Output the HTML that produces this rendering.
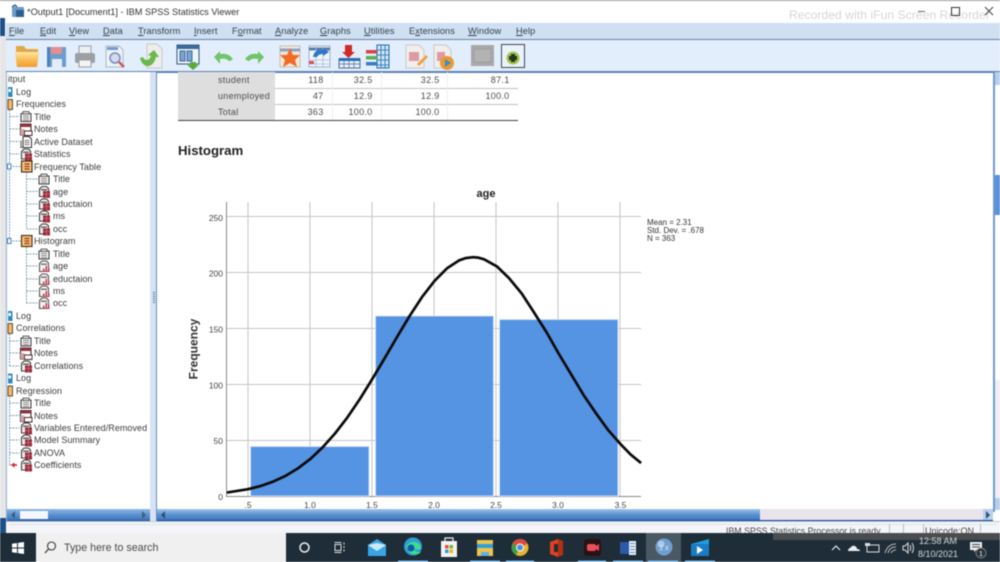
<!DOCTYPE html>
<html><head><meta charset="utf-8"><style>
html,body{margin:0;padding:0;width:1000px;height:562px;overflow:hidden;background:#fff}
body{position:relative;font-family:"Liberation Sans",sans-serif;color:#333}
.a{position:absolute}
.t{position:absolute;white-space:nowrap;line-height:12px;font-size:9px}
.m{position:absolute;top:25px;font-size:9.2px;line-height:12px;color:#333e4c;white-space:nowrap;letter-spacing:.1px}
.m u{text-underline-offset:1px}
.r{position:absolute;font-size:9px;line-height:12px;color:#4c4c4c;letter-spacing:.3px;white-space:nowrap}
.n{text-align:right;width:40px}
.tr{position:absolute;left:0;font-size:9px;line-height:12px;color:#3c3c3c;white-space:nowrap;letter-spacing:.05px}
svg{position:absolute;overflow:visible}
#wrap{position:absolute;left:0;top:0;width:1000px;height:562px;filter:blur(.45px)}
</style></head><body><div id="wrap">

<!-- window frame -->
<div class="a" style="left:0;top:0;width:1000px;height:1px;background:#9a9a9a"></div>
<div class="a" style="left:0;top:18px;width:5px;height:18px;background:#1e4f86"></div>
<div class="a" style="left:0;top:36px;width:6px;height:497px;background:#e6e6e6"></div>
<div class="a" style="left:0;top:518px;width:6px;height:15px;background:#1e4f86"></div>

<!-- title -->
<svg style="left:11px;top:4px" width="14" height="14" viewBox="0 0 14 14"><rect x="1" y="3" width="12" height="10" rx="1" fill="#6d9cc4"/><rect x="5" y="6" width="8" height="7" fill="#2f5f8c"/><path d="M1 3l3-2 2 2" fill="none" stroke="#2b5c88" stroke-width="1.4"/></svg>
<div class="t" style="left:27px;top:6px;font-size:9.2px;color:#333">*Output1 [Document1] - IBM SPSS Statistics Viewer</div>
<div class="t" style="left:789px;top:8px;font-size:12px;line-height:14px;color:#d6d6d6;letter-spacing:.1px">Recorded with iFun Screen Recorder</div>
<div class="a" style="left:918px;top:11px;width:7px;height:1px;background:#666"></div>
<div class="a" style="left:951px;top:7px;width:7px;height:7px;border:1px solid #333"></div>
<svg style="left:984px;top:6px" width="10" height="10" viewBox="0 0 10 10"><path d="M1 1l8 8M9 1l-8 8" stroke="#444" stroke-width="1"/></svg>

<!-- menu -->
<div class="a" style="left:6px;top:23px;width:994px;height:16px;background:#cfe0f3"></div>
<div class="a" style="left:6px;top:39px;width:994px;height:1px;background:#6d84a3"></div>
<div class="a" style="left:6px;top:40px;width:994px;height:31px;background:#e3eefc"></div>
<div class="a" style="left:6px;top:71px;width:994px;height:1.5px;background:#5f82b5"></div>
<div class="m" style="left:9px"><u>F</u>ile</div>
<div class="m" style="left:40px"><u>E</u>dit</div>
<div class="m" style="left:69px"><u>V</u>iew</div>
<div class="m" style="left:103px"><u>D</u>ata</div>
<div class="m" style="left:138px"><u>T</u>ransform</div>
<div class="m" style="left:194px"><u>I</u>nsert</div>
<div class="m" style="left:232px">F<u>o</u>rmat</div>
<div class="m" style="left:275px"><u>A</u>nalyze</div>
<div class="m" style="left:320px"><u>G</u>raphs</div>
<div class="m" style="left:364px"><u>U</u>tilities</div>
<div class="m" style="left:409px">E<u>x</u>tensions</div>
<div class="m" style="left:468px"><u>W</u>indow</div>
<div class="m" style="left:516px"><u>H</u>elp</div>

<!-- toolbar icons -->
<svg style="left:0;top:38px" width="540" height="34" viewBox="0 0 540 34">
 <defs><linearGradient id="fo" x1="0" y1="0" x2="0" y2="1"><stop offset="0" stop-color="#ffe6a8"/><stop offset=".45" stop-color="#fbc25c"/><stop offset="1" stop-color="#f19a2e"/></linearGradient></defs>
 <!-- folder -->
 <path d="M16 8h8l2 3h12v6H16z" fill="#e2a748"/><path d="M15 14h24l-2 15H17z" fill="url(#fo)"/>
 <!-- save -->
 <rect x="47" y="9" width="19" height="20" rx="1" fill="#6a9dd0"/><rect x="51" y="9" width="11" height="7" fill="#e58d92"/><rect x="52" y="21" width="10" height="8" fill="#e4ecf5"/><rect x="47" y="9" width="3" height="20" fill="#4d82ba"/>
 <!-- print -->
 <rect x="79" y="8" width="12" height="8" fill="#eceff2" stroke="#989da3"/><rect x="75" y="15" width="20" height="10" rx="2" fill="#9aa0a5"/><rect x="79" y="22" width="12" height="7" fill="#f3f3f3" stroke="#989da3"/>
 <!-- preview -->
 <path d="M106 8h13l4 4v17h-17z" fill="#eef2f6" stroke="#a9b9c8"/><rect x="107" y="9" width="11" height="3" fill="#6e9ccc"/><circle cx="115" cy="20" r="5" fill="#cfdcf0" stroke="#8488b8" stroke-width="1.500"/><path d="M119 24l5 5" stroke="#c8565a" stroke-width="2.400"/>
 <!-- export -->
 <path d="M147 6h10l5 5v19h-15z" fill="#ededed" stroke="#c9c9c9"/><path d="M140 20c1 5 5 9 9 8 4-1 6-5 7-9l3 0-5-7-6 5 3 1c-1 2-2 4-4 4-2 0-3-1-4-3z" fill="#6cb84f"/>
 <!-- table down -->
 <rect x="177" y="7" width="22" height="19" fill="#eef4fb" stroke="#33567c"/><rect x="177" y="7" width="22" height="4" fill="#3e6a9a"/><rect x="180" y="13" width="5" height="10" fill="#7ba4d0" stroke="#3e6a9a"/><rect x="187" y="13" width="5" height="10" fill="#7ba4d0" stroke="#3e6a9a"/><path d="M190 24h6v3h3l-6 5-6-5h3z" fill="#56ad3e"/>
 <!-- undo/redo -->
 <path d="M214 19l6-6v3c6-1 10 1 13 5l-3 2h-1c-2-2-5-3-9-2v5z" fill="#6fc56a"/><path d="M264 19l-6-6v3c-6-1-10 1-13 5l3 2h1c2-2 5-3 9-2v5z" fill="#6fc56a"/>
 <!-- star -->
 <rect x="280" y="8" width="20" height="21" fill="#efe9df" stroke="#c9c0ae"/><path d="M280 12h20" stroke="#8fa3bd" stroke-width="3"/><path d="M290 10l3 7h7l-5 5 2 7-7-4-7 4 2-7-5-5h7z" fill="#f26a25"/>
 <!-- goto -->
 <rect x="309" y="8" width="21" height="21" fill="#f0f4fa" stroke="#9fb3cc"/><path d="M309 11h21" stroke="#5a7da8" stroke-width="3"/><path d="M309 22h21M309 26h21M316 8v21M323 8v21" stroke="#a7bdd6" stroke-width=".8"/><path d="M313 19c1-6 5-8 10-7v-2l6 4-6 4v-2c-3 0-5 1-6 3z" fill="#2d76c8"/><rect x="309" y="23" width="5" height="3" fill="#e2485a"/>
 <!-- insert -->
 <rect x="339" y="21" width="21" height="9" fill="#e8f0fa" stroke="#4b6c97"/><rect x="339" y="20" width="21" height="3" fill="#2d6cb8"/><path d="M339 26h21M344 23v7M349 23v7M354 23v7" stroke="#4b6c97" stroke-width=".7"/><path d="M345 7h7v7h3l-6.500 6-6.500-6h3z" fill="#cf2a24"/>
 <!-- split -->
 <rect x="377" y="7" width="12" height="23" fill="#cfe4f6" stroke="#1f6da8"/><path d="M377 12h12M377 17h12M377 22h12M377 27h12M381 7v23M385 7v23" stroke="#1f6da8" stroke-width=".8"/><rect x="366" y="12" width="11" height="3.500" fill="#d6434a"/><rect x="366" y="18" width="11" height="3.500" fill="#5cb04c"/><rect x="366" y="24" width="11" height="3.500" fill="#3a79c4"/>
 <!-- note -->
 <path d="M406 7h13l5 5v18h-18z" fill="#f1eeee" stroke="#cdc8c8"/><path d="M409 14h10v9h-10z" fill="#de9aa2"/><path d="M417 26l9-9 2 2-9 9z" fill="#eda23c"/>
 <!-- chart play -->
 <path d="M434 7h12l5 5v18h-17z" fill="#f1eeee" stroke="#cdc8c8"/><path d="M437 14h8v9h-8z" fill="#de9aa2"/><circle cx="447" cy="25" r="7" fill="#ea9a33"/><path d="M445 21l6 4-6 4z" fill="#3b8ac7"/>
 <!-- gray box -->
 <rect x="471" y="7" width="23" height="21" fill="#a9a9a9"/><rect x="474" y="11" width="17" height="13" fill="#b3b3b3" stroke="#9c9c9c"/>
 <!-- green -->
 <rect x="501.500" y="6.500" width="23" height="23" fill="#eaf2fb" stroke="#3c4858"/><circle cx="513" cy="20" r="6.500" fill="#a6bf4b"/><path d="M511 16h4v2h2v4h-2v2h-4v-2h-2v-4h2z" fill="#1e3a20"/>
</svg>

<!-- tree panel -->
<div class="a" style="left:6px;top:72px;width:143px;height:449px;background:#fff;border-right:1px solid #7fa3cc;border-left:1px solid #8fb0d4"></div>
<div class="a" style="left:150px;top:72px;width:6px;height:449px;background:#d7e3f2"></div>
<div class="a" style="left:155.500px;top:72px;width:1.500px;height:449px;background:#5f8cc0"></div>
<div class="a" style="left:153px;top:292px;width:2px;height:12px;background:repeating-linear-gradient(#5a7da8 0 1px,transparent 1px 2px)"></div>

<svg style="left:0;top:0" width="150" height="480" viewBox="0 0 150 480">
 <defs>
  <g id="ti"><path d="M1 3h10v8H1z" fill="#f4f4f4" stroke="#3a3a3a"/><path d="M3 1h6v2.500H3z" fill="#d8d8d8" stroke="#444" stroke-width=".8"/><path d="M3 5.500h6M3 7.500h6M3 9.500h6" stroke="#8c8c8c"/></g>
  <g id="no"><path d="M.5 1h10.500v11H.5z" fill="#fff" stroke="#4a2428" stroke-width="1.100"/><path d="M.5 1h10.500v3H.5z" fill="#8e3540"/><path d="M.5 6h4v6H.5z" fill="#cfa7ab"/><path d="M4.500 8h7.500v4.500H4.500z" fill="#fff" stroke="#4a2428" stroke-width=".9"/></g>
  <g id="ad"><path d="M3 1h6l2.500 2.500V12H3z" fill="#fff" stroke="#333"/><path d="M1 5v7h2" fill="none" stroke="#555"/><path d="M4.500 5h5M4.500 7h5M4.500 9h5" stroke="#777"/></g>
  <g id="tb"><path d="M1.500 11V3.500L4 1h4.500l2 2v8z" fill="#eee" stroke="#3f3f3f" stroke-width="1.100"/><path d="M3 3.500h6V5H3z" fill="#666"/><rect x="5" y="5.500" width="7" height="7" fill="#9b2a3a"/><path d="M5 8.500h7M8.500 5.500v7" stroke="#d98a94" stroke-width=".6"/></g>
  <g id="ch"><path d="M1.500 11.500V3.500L4 1h4.500l2 2v8.500z" fill="#f3f3f3" stroke="#555" stroke-width="1.100"/><path d="M3 3.500h6V5H3z" fill="#777"/><path d="M5 12V8.500h1.500V12zM7.500 12V6H9v6zM10 12V8h1.500v4z" fill="#c73a48"/></g>
  <g id="hd"><rect x=".5" y=".5" width="10.500" height="11" fill="#f2c27a" stroke="#3f2c12" stroke-width="1.100"/><path d="M3.500 3.500h5M3.500 6h5M3.500 8.500h5" stroke="#a33a1a" stroke-width="1.300"/></g>
 </defs>
 <!-- connectors -->
 <g stroke="#7f9fb8" stroke-width="1" stroke-dasharray="2 1" fill="none">
  <path d="M9.500 110V241M26.500 172V229M26.500 247V303"/>
  <path d="M9.500 116.500h10M9.500 129h10M9.500 141.500h10M9.500 154h10M9.500 166.500h11M9.500 241h11"/>
  <path d="M26.500 179h11M26.500 191.500h11M26.500 204h11M26.500 216h11M26.500 229h11M26.500 254h11M26.500 266h11M26.500 279h11M26.500 291h11M26.500 303h11"/>
  <path d="M9.500 334V366M9.500 341h10M9.500 353h10M9.500 366h10"/>
  <path d="M9.500 397V465M9.500 403h10M9.500 415.500h10M9.500 428h10M9.500 440h10M9.500 453h10M9.500 465h3"/>
 </g>
 <!-- expand boxes -->
 <g fill="#fff" stroke="#4a80b8"><rect x="7.500" y="164" width="3.500" height="5"/><rect x="7.500" y="238.500" width="3.500" height="5"/></g>
 <!-- top-level cut-off icons -->
 <g><rect x="8" y="87" width="4.500" height="10" fill="#2f8bbf"/><rect x="8.500" y="89" width="2.500" height="3" fill="#fff"/><rect x="8" y="99.500" width="4.500" height="10" fill="#f1bb6c" stroke="#3f2a10" stroke-width=".8"/>
  <rect x="8" y="311" width="4.500" height="10" fill="#2f8bbf"/><rect x="8.500" y="313" width="2.500" height="3" fill="#fff"/><rect x="8" y="323.500" width="4.500" height="10" fill="#f1bb6c" stroke="#3f2a10" stroke-width=".8"/>
  <rect x="8" y="373.500" width="4.500" height="10" fill="#2f8bbf"/><rect x="8.500" y="375.500" width="2.500" height="3" fill="#fff"/><rect x="8" y="386" width="4.500" height="10" fill="#f1bb6c" stroke="#3f2a10" stroke-width=".8"/></g>
 <use href="#ti" x="20" y="110.500"/><use href="#no" x="20" y="123"/><use href="#ad" x="20" y="135.500"/><use href="#tb" x="20" y="148"/><use href="#hd" x="21" y="160.500"/>
 <use href="#ti" x="38" y="173"/><use href="#tb" x="38" y="185.500"/><use href="#tb" x="38" y="198"/><use href="#tb" x="38" y="210"/><use href="#tb" x="38" y="223"/>
 <use href="#hd" x="21" y="235"/><use href="#ti" x="38" y="248"/><use href="#ch" x="38" y="260"/><use href="#ch" x="38" y="273"/><use href="#ch" x="38" y="285"/><use href="#ch" x="38" y="297"/>
 <use href="#ti" x="20" y="335"/><use href="#no" x="20" y="347"/><use href="#tb" x="20" y="360"/>
 <use href="#ti" x="20" y="397"/><use href="#no" x="20" y="409.500"/><use href="#tb" x="20" y="422"/><use href="#tb" x="20" y="434"/><use href="#tb" x="20" y="447"/><use href="#tb" x="20" y="459"/>
 <path d="M12 465h5" stroke="#e01e28" stroke-width="1.600"/><path d="M11 465l3.500-2.500v5z" fill="#e01e28"/>
</svg>

<div class="tr" style="left:8px;top:73px">itput</div>
<div class="tr" style="left:16px;top:85.500px">Log</div>
<div class="tr" style="left:16px;top:98px">Frequencies</div>
<div class="tr" style="left:34px;top:110.500px">Title</div>
<div class="tr" style="left:34px;top:123px">Notes</div>
<div class="tr" style="left:34px;top:135.500px">Active Dataset</div>
<div class="tr" style="left:34px;top:148px">Statistics</div>
<div class="tr" style="left:34px;top:160.500px">Frequency Table</div>
<div class="tr" style="left:53px;top:173px">Title</div>
<div class="tr" style="left:53px;top:185.500px">age</div>
<div class="tr" style="left:53px;top:198px">eductaion</div>
<div class="tr" style="left:53px;top:210px">ms</div>
<div class="tr" style="left:53px;top:223px">occ</div>
<div class="tr" style="left:34px;top:235px">Histogram</div>
<div class="tr" style="left:53px;top:248px">Title</div>
<div class="tr" style="left:53px;top:260px">age</div>
<div class="tr" style="left:53px;top:273px">eductaion</div>
<div class="tr" style="left:53px;top:285px">ms</div>
<div class="tr" style="left:53px;top:297px">occ</div>
<div class="tr" style="left:16px;top:310px">Log</div>
<div class="tr" style="left:16px;top:322px">Correlations</div>
<div class="tr" style="left:34px;top:335px">Title</div>
<div class="tr" style="left:34px;top:347px">Notes</div>
<div class="tr" style="left:34px;top:360px">Correlations</div>
<div class="tr" style="left:16px;top:372px">Log</div>
<div class="tr" style="left:16px;top:385px">Regression</div>
<div class="tr" style="left:34px;top:397px">Title</div>
<div class="tr" style="left:34px;top:409.500px">Notes</div>
<div class="tr" style="left:34px;top:422px">Variables Entered/Removed</div>
<div class="tr" style="left:34px;top:434px">Model Summary</div>
<div class="tr" style="left:34px;top:447px">ANOVA</div>
<div class="tr" style="left:34px;top:459px">Coefficients</div>

<!-- table -->
<div class="a" style="left:178px;top:72px;width:97px;height:48px;background:#dedede"></div>
<div class="a" style="left:275px;top:88px;width:243px;height:1px;background:#c4c4c4"></div>
<div class="a" style="left:275px;top:104px;width:243px;height:1px;background:#c4c4c4"></div>
<div class="a" style="left:178px;top:119.500px;width:340px;height:1px;background:#444"></div>
<div class="a" style="left:332px;top:72px;width:1px;height:48px;background:#eee"></div>
<div class="a" style="left:381px;top:72px;width:1px;height:48px;background:#eee"></div>
<div class="a" style="left:447px;top:72px;width:1px;height:48px;background:#eee"></div>
<div class="r" style="left:218px;top:74px">student</div>
<div class="r" style="left:218px;top:90px">unemployed</div>
<div class="r" style="left:218px;top:106px">Total</div>
<div class="r n" style="left:283.500px;top:74px">118</div><div class="r n" style="left:332.500px;top:74px">32.5</div><div class="r n" style="left:399.500px;top:74px">32.5</div><div class="r n" style="left:469.500px;top:74px">87.1</div>
<div class="r n" style="left:283.500px;top:90px">47</div><div class="r n" style="left:332.500px;top:90px">12.9</div><div class="r n" style="left:399.500px;top:90px">12.9</div><div class="r n" style="left:469.500px;top:90px">100.0</div>
<div class="r n" style="left:283.500px;top:106px">363</div><div class="r n" style="left:332.500px;top:106px">100.0</div><div class="r n" style="left:399.500px;top:106px">100.0</div>

<div class="t" style="left:178px;top:143px;font-size:13.200px;line-height:15px;font-weight:bold;color:#222">Histogram</div>

<!-- chart -->
<svg style="left:0;top:0" width="1000" height="510" viewBox="0 0 1000 510">
 <g stroke="#c6c6c6" stroke-width="1" fill="none">
  <path d="M226 216.500H641M226 272.500H641M226 328.500H641M226 384.500H641M226 440.500H641"/>
  <path d="M248 202V496M310 202V496M372 202V496M434 202V496M496 202V496M558 202V496M620 202V496"/>
 </g>
 <path d="M226.500 202V496.500H641" fill="none" stroke="#8a8a8a" stroke-width="1"/>
 <g fill="#5593e3" stroke="#cfe2f5" stroke-width="1">
  <rect x="250.500" y="446.500" width="118.500" height="49.500"/>
  <rect x="375.500" y="316" width="118" height="180"/>
  <rect x="499.500" y="319.500" width="118.500" height="176.500"/>
 </g>
 <polyline fill="none" stroke="#0b0b0b" stroke-width="2.700" stroke-linejoin="round" stroke-linecap="butt" points="226.900,492.600 248,489.200 260.400,486.100 272.900,481.700 285.300,476 297.700,468.500 310.200,459.100 322.600,447.400 335,433.500 347.500,417.300 359.900,399 372.300,379 384.800,358 397.200,336.700 409.600,316 422,297.100 434.500,280.900 446.900,268.400 459.300,260.300 465.500,258.100 473,257.200 478,257.600 484.100,259.300 496.900,266.400 509,278.100 521.800,293.600 533.800,312.100 546.700,332.500 558.700,353.700 571.500,374.900 583.600,395.100 596.400,413.800 608.400,430.400 621.200,444.800 630.800,454.700 641.100,463.100"/>
 <g font-family="Liberation Sans, sans-serif" font-size="8.500" fill="#444" text-anchor="end">
  <text x="223" y="221">250</text><text x="223" y="276.500">200</text><text x="223" y="332.500">150</text><text x="223" y="388.500">100</text><text x="223" y="444">50</text><text x="223" y="500">0</text>
 </g>
 <g font-family="Liberation Sans, sans-serif" font-size="8.500" fill="#444" text-anchor="middle">
  <text x="248" y="508">.5</text><text x="310" y="508">1.0</text><text x="372" y="508">1.5</text><text x="434" y="508">2.0</text><text x="496" y="508">2.5</text><text x="558" y="508">3.0</text><text x="620.500" y="508">3.5</text>
 </g>
 <text x="486" y="197" font-family="Liberation Sans, sans-serif" font-size="11" font-weight="bold" fill="#222" text-anchor="middle">age</text>
 <text transform="translate(197.500,349) rotate(-90)" font-family="Liberation Sans, sans-serif" font-size="12" font-weight="bold" fill="#333" text-anchor="middle">Frequency</text>
 <g font-family="Liberation Sans, sans-serif" font-size="8" fill="#333">
  <text x="647" y="225">Mean = 2.31</text><text x="647" y="233">Std. Dev. = .678</text><text x="647" y="241">N = 363</text>
 </g>
</svg>

<!-- right scrollbar -->
<div class="a" style="left:993px;top:72px;width:1.500px;height:440px;background:#6f9ad0"></div>
<div class="a" style="left:994.500px;top:72px;width:5.500px;height:13px;background:#b9cfe8"></div>
<div class="a" style="left:994.500px;top:175px;width:5.500px;height:40px;background:#5b94d6"></div>
<div class="a" style="left:994.500px;top:215px;width:5.500px;height:283px;background:#fff"></div>
<div class="a" style="left:994.500px;top:380px;width:5.500px;height:118px;background:#f2eef4"></div>
<div class="a" style="left:994.500px;top:498px;width:5.500px;height:12px;background:#b9cfe8"></div>

<!-- bottom scrollbars -->
<div class="a" style="left:7px;top:509px;width:143px;height:12px;background:linear-gradient(#8fb8e6,#5d92d0 50%,#3f76b8);border-bottom:1px solid #1e4f9c;box-sizing:border-box"></div>
<div class="a" style="left:20px;top:511px;width:28px;height:8px;background:#f4f7fb"></div>
<svg style="left:11px;top:511px" width="5" height="8"><path d="M4 0v8L0 4z" fill="#3c5f86"/></svg>
<svg style="left:142px;top:511px" width="5" height="8"><path d="M0 0v8l4-4z" fill="#3c5f86"/></svg>
<div class="a" style="left:157px;top:509px;width:603px;height:12px;background:linear-gradient(#9fc4ea,#5d92d0 50%,#3f78bc);border-bottom:1.500px solid #0e3f9a;box-sizing:border-box"></div>
<div class="a" style="left:760px;top:509px;width:224px;height:12px;background:#e9e4ec;border-bottom:1.500px solid #0e3f9a;box-sizing:border-box"></div>
<div class="a" style="left:983px;top:509px;width:10px;height:12px;background:#b9cfe8;border-bottom:1.500px solid #0e3f9a;box-sizing:border-box"></div>
<svg style="left:161px;top:511px" width="5" height="8"><path d="M4 0v8L0 4z" fill="#2c4f76"/></svg>
<svg style="left:986px;top:511px" width="5" height="8"><path d="M0 0v8l4-4z" fill="#2c4f76"/></svg>

<!-- status -->
<div class="a" style="left:6px;top:521px;width:994px;height:12px;background:#f3f5f8;border-top:1px solid #bcc6d2;box-sizing:border-box"></div>
<div class="a" style="left:9px;top:524px;width:988px;height:1px;background:#dfe3e8"></div>
<div class="t" style="left:726px;top:525px;font-size:8.800px;color:#444">IBM SPSS Statistics Processor is ready</div>
<div class="t" style="left:925px;top:525px;font-size:9px;color:#444">Unicode:ON</div>
<div class="a" style="left:889px;top:524px;width:1px;height:9px;background:#bbb"></div>
<div class="a" style="left:903px;top:524px;width:1px;height:9px;background:#bbb"></div>
<div class="a" style="left:923px;top:524px;width:1px;height:9px;background:#bbb"></div>
<div class="a" style="left:980px;top:524px;width:1px;height:9px;background:#bbb"></div>

<!-- taskbar -->
<div class="a" style="left:0;top:533px;width:1000px;height:29px;background:#1e2d38"></div>
<div class="a" style="left:773px;top:533px;width:227px;height:7px;background:#4a4d50"></div>
<svg style="left:12px;top:542px" width="12" height="12" viewBox="0 0 12 12"><path d="M0 1.800L5 1v4.500H0zM6 .9L12 0v5.500H6zM0 6.500h5V11L0 10.200zM6 6.500h6V12L6 11.100z" fill="#fff"/></svg>
<div class="a" style="left:36px;top:533px;width:250px;height:29px;background:#f0f0f0"></div>
<svg style="left:44px;top:541px" width="13" height="13" viewBox="0 0 13 13"><circle cx="7.500" cy="5" r="4" fill="none" stroke="#333" stroke-width="1.100"/><path d="M4.500 8L1 12" stroke="#333" stroke-width="1.200"/></svg>
<div class="t" style="left:64px;top:541px;font-size:10.700px;line-height:14px;color:#4a4a4a">Type here to search</div>
<svg style="left:290px;top:533px" width="440" height="29" viewBox="0 0 440 29">
 <circle cx="14.500" cy="14.500" r="4.500" fill="none" stroke="#eee" stroke-width="1.500"/>
 <path d="M44.500 9.500h7M44.500 19.500h7" stroke="#ddd"/><rect x="45" y="11.500" width="6" height="6" fill="none" stroke="#ddd"/><path d="M54 9.500v10" stroke="#ddd" stroke-dasharray="2 1.500"/>
 <!-- mail -->
 <path d="M78 12l9-6 9 6v11H78z" fill="#3aa5e6"/><path d="M78 12l9 6 9-6-9-2z" fill="#cdeafb"/>
 <!-- edge -->
 <circle cx="123" cy="13.500" r="9" fill="#2d9fd8"/><path d="M116 14c2-5 9-7 13-3 2 2 2 4 1 5-1 1-5 1-6-1 0 3 3 5 7 4-3 4-11 3-13-2z" fill="#3fdc8c"/><circle cx="121" cy="15" r="3.500" fill="#0f5aa8"/>
 <rect x="108" y="27.500" width="30" height="1.500" fill="#76b9ed"/>
 <!-- store -->
 <rect x="151" y="8" width="16" height="16" fill="#f2f2f2"/><path d="M155 8V5h8v3" fill="none" stroke="#eee" stroke-width="1.200"/><rect x="155" y="12" width="3.500" height="3.500" fill="#e74c3c"/><rect x="159.500" y="12" width="3.500" height="3.500" fill="#6dbb3f"/><rect x="155" y="16.500" width="3.500" height="3.500" fill="#2f9be0"/><rect x="159.500" y="16.500" width="3.500" height="3.500" fill="#f4b400"/>
 <!-- explorer -->
 <rect x="187" y="7" width="16" height="16" fill="#f0c34e"/><rect x="187" y="11" width="16" height="4" fill="#2fa1d8"/><rect x="191" y="19" width="8" height="4" fill="#5bb4e0"/>
 <rect x="180" y="27.500" width="30" height="1.500" fill="#76b9ed"/>
 <!-- chrome -->
 <circle cx="230" cy="14.500" r="8.500" fill="#e8b52a"/><path d="M230 14.500L222.500 10.500A8.500 8.500 0 0 1 237.500 10.500z" fill="#dd4b3c"/><path d="M230 14.500L222.500 10.500A8.500 8.500 0 0 0 226 22z" fill="#3f9e4a"/><circle cx="230" cy="14.500" r="3.500" fill="#4a90e0" stroke="#fff"/>
 <rect x="216" y="27.500" width="28" height="1.500" fill="#76b9ed"/>
 <!-- office -->
 <path d="M260 9l8-3v18l-8-3z" fill="#e0411f"/><path d="M268 6l5 2v14l-5 2z" fill="#b4300f"/><rect x="264" y="11" width="4" height="8" fill="#1e2d38"/>
 <!-- camera -->
 <rect x="294" y="6" width="17" height="17" rx="3" fill="#2a1114"/><rect x="297" y="11" width="9" height="7" rx="2" fill="#e8505a"/><path d="M306 13l3-2v7l-3-2z" fill="#e8505a"/>
 <rect x="288" y="27.500" width="28" height="1.500" fill="#76b9ed"/>
 <!-- word -->
 <rect x="330" y="9" width="9" height="12" fill="#2b5aa8"/><rect x="339" y="8" width="7" height="14" fill="#e8eef8"/><path d="M340 10.500h5M340 13.500h5M340 16.500h5M340 19.500h5" stroke="#6a8bc4"/>
 <rect x="323" y="27.500" width="30" height="1.500" fill="#76b9ed"/>
 <!-- spss active -->
 <rect x="356" y="0" width="35" height="29" fill="#4a5863"/>
 <circle cx="374" cy="14" r="8.500" fill="#6f9fd0"/><circle cx="371" cy="11" r="3.500" fill="#a9c9e8"/><text x="374" y="17" font-family="Liberation Sans, sans-serif" font-size="7" fill="#e6eef8" text-anchor="middle">2 x</text>
 <rect x="358" y="27.500" width="30" height="1.500" fill="#76b9ed"/>
 <!-- movie -->
 <path d="M401 11l18-5v5z" fill="#1e9ee0"/><rect x="401" y="11" width="18" height="12" fill="#1b7cc4"/><path d="M407 13l6 4-6 4z" fill="#fff"/>
 <rect x="395" y="27.500" width="30" height="1.500" fill="#76b9ed"/>
</svg>
<svg style="left:828px;top:533px" width="165" height="29" viewBox="0 0 165 29">
 <path d="M4 17l4-4 4 4" fill="none" stroke="#e6e6e6" stroke-width="1.200"/>
 <path d="M20 18c0-3 3-3 4-5 3-1 5 1 5 3 2 0 3 1 3 2z" fill="#eee"/>
 <rect x="39" y="12" width="12" height="7" fill="none" stroke="#ddd"/><rect x="37" y="10" width="5" height="3" fill="#ddd"/>
 <path d="M57 20c2-7 6-9 11-9M60 20c1-4 4-6 8-6M63 20c1-2 3-3 5-3" fill="none" stroke="#bbb" stroke-width="1"/>
 <path d="M75 13h2l3-3v10l-3-3h-2z" fill="none" stroke="#ddd"/><path d="M82 12c1 2 1 4 0 6M84 10c2 3 2 7 0 10" fill="none" stroke="#ddd"/>
 <path d="M142 9h12v8h-6l-2 2v-2h-4z" fill="#eee"/><path d="M144 11.500h8M144 14h8" stroke="#444"/>
 <circle cx="153" cy="20" r="5" fill="#27343e" stroke="#999" stroke-width=".7"/><text x="153" y="23" font-family="Liberation Sans, sans-serif" font-size="7.500" fill="#eee" text-anchor="middle">1</text>
</svg>
<div class="t" style="left:919px;top:535px;font-size:9px;color:#d8d8d8">12:58 AM</div>
<div class="t" style="left:918px;top:548px;font-size:9px;color:#d8d8d8">8/10/2021</div>

</div></body></html>
